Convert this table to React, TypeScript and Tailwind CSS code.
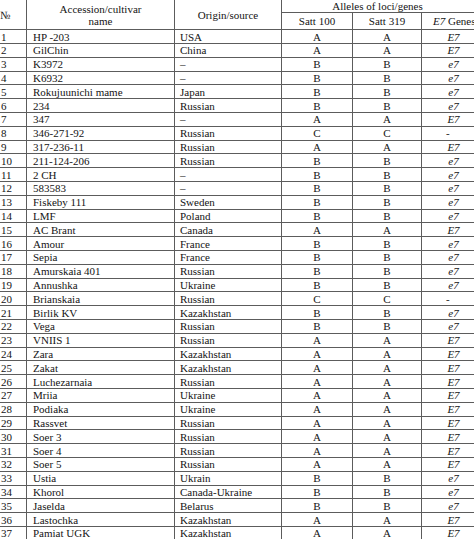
const rows: [string, string, string, string, string, string][] = [
  ["1", "HP -203", "USA", "A", "A", "E7"],
  ["2", "GilChin", "China", "A", "A", "E7"],
  ["3", "K3972", "–", "B", "B", "e7"],
  ["4", "K6932", "–", "B", "B", "e7"],
  ["5", "Rokujuunichi mame", "Japan", "B", "B", "e7"],
  ["6", "234", "Russian", "B", "B", "e7"],
  ["7", "347", "–", "A", "A", "E7"],
  ["8", "346-271-92", "Russian", "C", "C", "-"],
  ["9", "317-236-11", "Russian", "A", "A", "E7"],
  ["10", "211-124-206", "Russian", "B", "B", "e7"],
  ["11", "2 CH", "–", "B", "B", "e7"],
  ["12", "583583", "–", "B", "B", "e7"],
  ["13", "Fiskeby 111", "Sweden", "B", "B", "e7"],
  ["14", "LMF", "Poland", "B", "B", "e7"],
  ["15", "AC Brant", "Canada", "A", "A", "E7"],
  ["16", "Amour", "France", "B", "B", "e7"],
  ["17", "Sepia", "France", "B", "B", "e7"],
  ["18", "Amurskaia 401", "Russian", "B", "B", "e7"],
  ["19", "Annushka", "Ukraine", "B", "B", "e7"],
  ["20", "Brianskaia", "Russian", "C", "C", "-"],
  ["21", "Birlik KV", "Kazakhstan", "B", "B", "e7"],
  ["22", "Vega", "Russian", "B", "B", "e7"],
  ["23", "VNIIS 1", "Russian", "A", "A", "E7"],
  ["24", "Zara", "Kazakhstan", "A", "A", "E7"],
  ["25", "Zakat", "Kazakhstan", "A", "A", "E7"],
  ["26", "Luchezarnaia", "Russian", "A", "A", "E7"],
  ["27", "Mriia", "Ukraine", "A", "A", "E7"],
  ["28", "Podiaka", "Ukraine", "A", "A", "E7"],
  ["29", "Rassvet", "Russian", "A", "A", "E7"],
  ["30", "Soer 3", "Russian", "A", "A", "E7"],
  ["31", "Soer 4", "Russian", "A", "A", "E7"],
  ["32", "Soer 5", "Russian", "A", "A", "E7"],
  ["33", "Ustia", "Ukrain", "B", "B", "e7"],
  ["34", "Khorol", "Canada-Ukraine", "B", "B", "e7"],
  ["35", "Jaselda", "Belarus", "B", "B", "e7"],
  ["36", "Lastochka", "Kazakhstan", "A", "A", "E7"],
  ["37", "Pamiat UGK", "Kazakhstan", "A", "A", "E7"],
]

const cols = "grid grid-cols-[31px_148px_107px_71px_69px_64px]"
const cell = "border-r border-[#5c5c5c] flex items-center whitespace-nowrap"

export default function App() {
  return (
    <div className="w-[474px] h-[539px] overflow-hidden bg-white text-[#141414] text-[11px] leading-[12px] font-['Liberation_Serif',serif]">
      <div className="w-[490px] -ml-[4px]">
        {/* header */}
        <div className={`${cols} grid-rows-[13px_16.3px] border-b border-[#5c5c5c]`}>
          <div className={`${cell} row-span-2 pl-[4px]`}>№</div>
          <div className={`${cell} row-span-2 flex-col justify-center text-center`}>
            <span>Accession/cultivar</span>
            <span>name</span>
          </div>
          <div className={`${cell} row-span-2 justify-center`}>Origin/source</div>
          <div className={`${cell} col-span-3 justify-center pr-[12px] border-b pb-[1px]`}>Alleles of loci/genes</div>
          <div className={`${cell} justify-center`}>Satt 100</div>
          <div className={`${cell} justify-center`}>Satt 319</div>
          <div className={`${cell} pl-[11px]`}>
            <i>E7</i>&nbsp;Genes
          </div>
        </div>

        {/* body */}
        {rows.map(([n, name, origin, a, b, gene]) => (
          <div key={n} className={`${cols} h-[13.8px] border-b border-[#5c5c5c]`}>
            <div className={`${cell} pl-[5px]`}>{n}</div>
            <div className={`${cell} pl-[6px]`}>{name}</div>
            <div className={`${cell} pl-[5px]`}>{origin}</div>
            <div className={`${cell} justify-center`}>{a}</div>
            <div className={`${cell} justify-center`}>{b}</div>
            {gene === "-" ? (
              <div className={`${cell} pl-[24px]`}>-</div>
            ) : (
              <div className={`${cell} justify-center italic`}>{gene}</div>
            )}
          </div>
        ))}
      </div>
    </div>
  )
}
